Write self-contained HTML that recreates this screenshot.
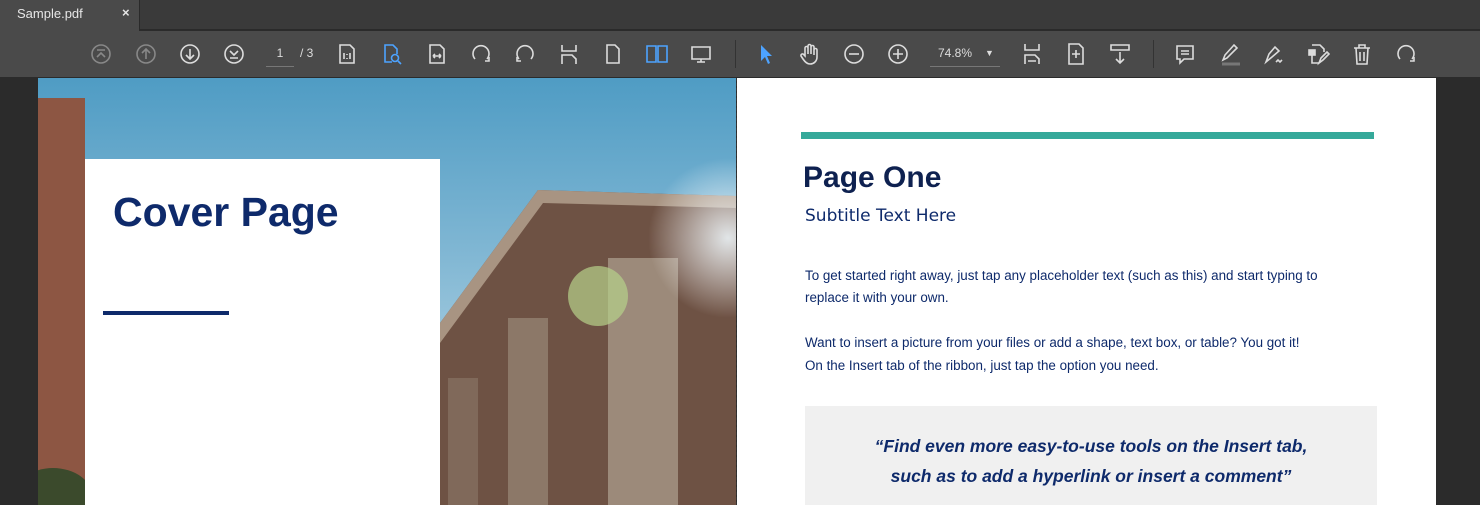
<!DOCTYPE html>
<html><head><meta charset="utf-8"><style>
*{margin:0;padding:0;box-sizing:border-box}
body{width:1480px;height:505px;overflow:hidden;background:#2b2b2b;font-family:"Liberation Sans",sans-serif;position:relative}
.title{position:absolute;left:0;top:0;width:1480px;height:30px;background:#3a3a3a;border-bottom:1px solid #2a2a2a}
.tab{position:absolute;left:0;top:0;width:140px;height:31px;background:#4a4a4a;color:#e6e6e6;font-size:13px;border-right:1px solid #2a2a2a}
.tool{position:absolute;left:0;top:31px;width:1480px;height:46px;background:#4a4a4a}
svg.i{position:absolute;top:42px;width:24px;height:24px;fill:none;stroke:#dcdcdc;stroke-width:1.6}
.pg{position:absolute;top:78px;height:427px;background:#fff;overflow:hidden}
</style></head><body>
<div class="title"></div>
<div class="tab"><span style="position:absolute;left:17px;top:6px">Sample.pdf</span><span style="position:absolute;left:122px;top:5px;font-weight:bold">×</span></div>
<div class="tool">
<div style="position:absolute;left:266px;top:14px;width:28px;border-bottom:1px solid #777;color:#ddd;font-size:12px;text-align:center;height:22px;line-height:16px">1</div>
<div style="position:absolute;left:300px;top:15px;color:#ddd;font-size:12px">/ 3</div>
<div style="position:absolute;left:930px;top:14px;width:70px;border-bottom:1px solid #777;color:#ddd;font-size:12px;height:22px;line-height:16px;padding-left:8px">74.8%<span style="position:absolute;left:55px;font-size:9px">▼</span></div>
<div style="position:absolute;left:735px;top:9px;width:1px;height:28px;background:#333"></div>
<div style="position:absolute;left:1153px;top:9px;width:1px;height:28px;background:#333"></div>
</div>
<svg class="i" style="left:89px;stroke:#888" viewBox="0 0 24 24"><circle cx="12" cy="12" r="9"/><path d="M8 8h8M8 15l4-4 4 4"/></svg>
<svg class="i" style="left:134px;stroke:#888" viewBox="0 0 24 24"><circle cx="12" cy="12" r="9"/><path d="M12 17V7M8 11l4-4 4 4"/></svg>
<svg class="i" style="left:178px" viewBox="0 0 24 24"><circle cx="12" cy="12" r="9"/><path d="M12 7v10M8 13l4 4 4-4"/></svg>
<svg class="i" style="left:222px" viewBox="0 0 24 24"><circle cx="12" cy="12" r="9"/><path d="M8 16h8M8 9l4 4 4-4"/></svg>
<svg class="i" style="left:335px" viewBox="0 0 24 24"><path d="M5 3h10l4 4v14H5z"/><path d="M9 11v6M12 12v1M12 16v1M15 11v6"/></svg>
<svg class="i" style="left:380px;stroke:#4da3ff" viewBox="0 0 24 24"><path d="M12 20H5V3h8l4 4v5"/><circle cx="15" cy="16" r="3.5"/><path d="M18 19l3 3"/></svg>
<svg class="i" style="left:425px" viewBox="0 0 24 24"><path d="M5 3h10l4 4v14H5z"/><path d="M8 14h8M8 14l2-2M8 14l2 2M16 14l-2-2M16 14l-2 2"/></svg>
<svg class="i" style="left:469px" viewBox="0 0 24 24"><path d="M18 17A8 8 0 1 0 6 17"/><path d="M16 19h4v-4" /></svg>
<svg class="i" style="left:513px" viewBox="0 0 24 24"><path d="M6 17A8 8 0 1 1 18 17"/><path d="M8 19H4v-4"/></svg>
<svg class="i" style="left:557px" viewBox="0 0 24 24"><path d="M5 3v6h14V3M5 22v-9h10l4 4v5"/></svg>
<svg class="i" style="left:601px" viewBox="0 0 24 24"><path d="M6 3h8l4 4v14H6z"/></svg>
<svg class="i" style="left:645px;stroke:#4da3ff" viewBox="0 0 24 24"><path d="M2 4h9v16H2zM13 4h9v16h-9z"/></svg>
<svg class="i" style="left:689px" viewBox="0 0 24 24"><path d="M3 5h18v12H3zM12 17v3M8 20h8"/></svg>
<svg class="i" style="left:754px;stroke:none;fill:#4da3ff" viewBox="0 0 24 24"><path d="M7 3l11 11h-5l3 7-2 1-3-7-4 4z"/></svg>
<svg class="i" style="left:798px" viewBox="0 0 24 24"><path d="M7 14V6a1.5 1.5 0 0 1 3 0v6V4a1.5 1.5 0 0 1 3 0v8V5a1.5 1.5 0 0 1 3 0v8V8a1.5 1.5 0 0 1 3 0v7c0 4-3 7-7 7-3 0-5-2-7-5l-2-3a1.5 1.5 0 0 1 3-1z"/></svg>
<svg class="i" style="left:842px" viewBox="0 0 24 24"><circle cx="12" cy="12" r="9"/><path d="M7 12h10"/></svg>
<svg class="i" style="left:886px" viewBox="0 0 24 24"><circle cx="12" cy="12" r="9"/><path d="M7 12h10M12 7v10"/></svg>
<svg class="i" style="left:1020px" viewBox="0 0 24 24"><path d="M5 2v6h14V2M5 22v-9h10l4 4v5M8 19h8"/></svg>
<svg class="i" style="left:1064px" viewBox="0 0 24 24"><path d="M5 2h10l4 4v16H5z"/><path d="M12 8v8M8 12h8"/></svg>
<svg class="i" style="left:1108px" viewBox="0 0 24 24"><path d="M3 3h18v5H3zM12 10v11M8 17l4 4 4-4"/></svg>
<svg class="i" style="left:1173px" viewBox="0 0 24 24"><path d="M4 4h16v13h-9l-4 4v-4H4zM8 9h8M8 12h8"/></svg>
<svg class="i" style="left:1218px" viewBox="0 0 24 24"><path d="M5 18l2-5 9-10 3 3-10 10z"/><path d="M4 22h18" stroke="#777" stroke-width="3"/></svg>
<svg class="i" style="left:1262px" viewBox="0 0 24 24"><path d="M4 20l3-8 6-7 4 4-7 6z"/><path d="M14 20l2-2 2 2 2-2"/></svg>
<svg class="i" style="left:1306px" viewBox="0 0 24 24"><path d="M6 3h8l4 4v3M6 13v8h7"/><rect x="3" y="8" width="6" height="5" fill="#dcdcdc"/><path d="M13 21l2-5 6-6 2 2-6 6z"/></svg>
<svg class="i" style="left:1350px" viewBox="0 0 24 24"><path d="M4 6h16M9 6V3h6v3M6 6l1 16h10l1-16M10 10v9M14 10v9"/></svg>
<svg class="i" style="left:1394px" viewBox="0 0 24 24"><path d="M18 17A8 8 0 1 0 6 17"/><path d="M16 19h4v-4"/></svg>

<div class="pg" style="left:38px;width:698px;background:linear-gradient(180deg,#4f9cc4 0%,#7fb6d3 40%,#a7cde0 70%,#c8dde6 100%)">
<svg width="698" height="427" style="position:absolute;left:0;top:0">
<defs><radialGradient id="g" cx="0.5" cy="0.5" r="0.5"><stop offset="0" stop-color="#eef6fa" stop-opacity=".9"/><stop offset="1" stop-color="#fff" stop-opacity="0"/></radialGradient></defs>
<rect x="0" y="20" width="47" height="407" fill="#8d5643"/>
<polygon points="402,427 402,245 500,112 698,118 698,427" fill="#6e5244"/>
<polygon points="402,245 500,112 698,118 698,130 505,125 402,265" fill="#a89482"/>
<rect x="570" y="180" width="70" height="247" fill="#9c8a7a"/>
<rect x="470" y="240" width="40" height="187" fill="#8c7868"/>
<rect x="410" y="300" width="30" height="127" fill="#80695a"/>
<circle cx="560" cy="218" r="30" fill="#b7d28a" opacity=".7"/>
<circle cx="690" cy="160" r="80" fill="url(#g)"/>
<ellipse cx="15" cy="420" rx="40" ry="30" fill="#3b4a2c"/>
</svg>
<div style="position:absolute;left:47px;top:81px;width:355px;height:346px;background:#fff">
<div style="position:absolute;left:28px;top:30px;font-size:41px;font-weight:bold;color:#0e2a6b">Cover Page</div>
<div style="position:absolute;left:18px;top:152px;width:126px;height:4px;background:#0e2a6b"></div>
</div>
</div>
<div style="position:absolute;left:736px;top:78px;height:427px;border-left:1px dashed #333"></div>
<div class="pg" style="left:737px;width:699px">
<div style="position:absolute;left:64px;top:54px;width:573px;height:7px;background:#35a99a"></div>
<div style="position:absolute;left:66px;top:83px;font-size:30px;font-weight:bold;color:#0e2150">Page One</div>
<div style="position:absolute;left:68px;top:128px;color:#0e2a6b;font-family:'DejaVu Sans',sans-serif;font-size:17px">Subtitle Text Here</div>
<div style="position:absolute;left:68px;top:187px;font-size:13.4px;line-height:22px;color:#0e2a6b;width:560px">To get started right away, just tap any placeholder text (such as this) and start typing to replace it with your own.</div>
<div style="position:absolute;left:68px;top:253px;font-size:13.4px;line-height:23px;color:#0e2a6b;width:505px">Want to insert a picture from your files or add a shape, text box, or table? You got it! On the Insert tab of the ribbon, just tap the option you need.</div>
<div style="position:absolute;left:68px;top:328px;width:572px;height:110px;background:#f0f0f0;text-align:center;color:#0e2a6b;font-weight:bold;font-style:italic;font-size:17.5px;line-height:30px;padding-top:25px">“Find even more easy-to-use tools on the Insert tab,<br>such as to add a hyperlink or insert a comment”</div>
</div>
</body></html>
